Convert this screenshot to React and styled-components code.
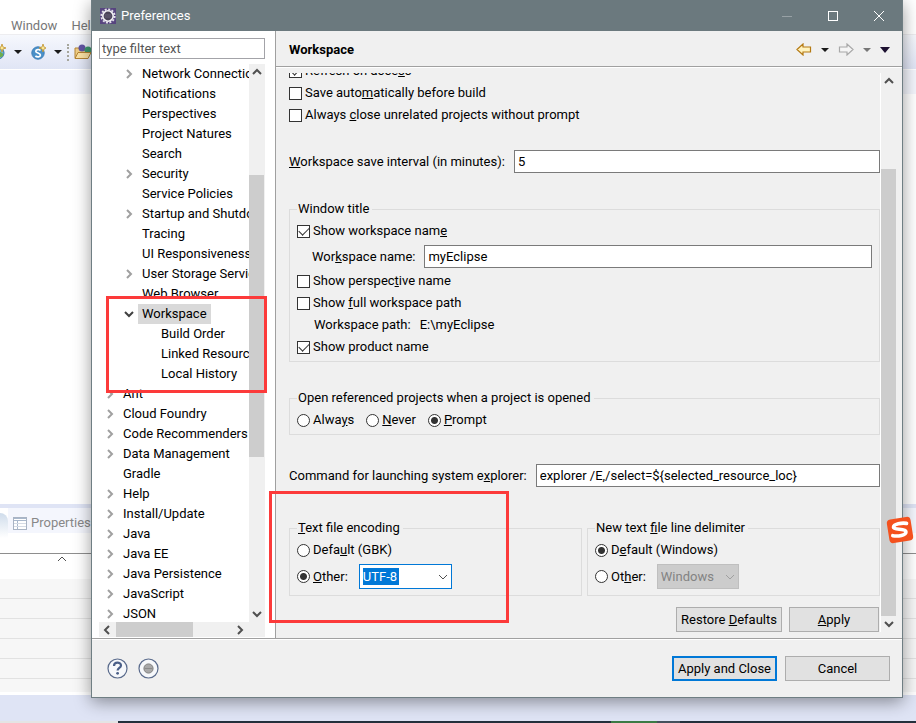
import React, { useState } from 'react'
import styled, { createGlobalStyle, css } from 'styled-components'

const GlobalStyle = createGlobalStyle`
  * {
    box-sizing: border-box;
  }
  body {
    margin: 0;
    background: #fff;
    color: #000;
    font: 13px/18px Roboto, "Liberation Sans", sans-serif;
  }
  button, input, select {
    font: inherit;
    color: inherit;
  }
  svg {
    flex: none;
  }
`

const TREE = [
  { label: 'Network Connections', level: 1, arrow: 'closed' },
  { label: 'Notifications', level: 1 },
  { label: 'Perspectives', level: 1 },
  { label: 'Project Natures', level: 1 },
  { label: 'Search', level: 1 },
  { label: 'Security', level: 1, arrow: 'closed' },
  { label: 'Service Policies', level: 1 },
  { label: 'Startup and Shutdown', level: 1, arrow: 'closed' },
  { label: 'Tracing', level: 1 },
  { label: 'UI Responsiveness', level: 1 },
  { label: 'User Storage Service', level: 1, arrow: 'closed' },
  { label: 'Web Browser', level: 1 },
  { label: 'Workspace', level: 1, arrow: 'open', selected: true },
  { label: 'Build Order', level: 2 },
  { label: 'Linked Resources', level: 2 },
  { label: 'Local History', level: 2 },
  { label: 'Ant', level: 0, arrow: 'closed' },
  { label: 'Cloud Foundry', level: 0, arrow: 'closed' },
  { label: 'Code Recommenders', level: 0, arrow: 'closed' },
  { label: 'Data Management', level: 0, arrow: 'closed' },
  { label: 'Gradle', level: 0 },
  { label: 'Help', level: 0, arrow: 'closed' },
  { label: 'Install/Update', level: 0, arrow: 'closed' },
  { label: 'Java', level: 0, arrow: 'closed' },
  { label: 'Java EE', level: 0, arrow: 'closed' },
  { label: 'Java Persistence', level: 0, arrow: 'closed' },
  { label: 'JavaScript', level: 0, arrow: 'closed' },
  { label: 'JSON', level: 0, arrow: 'closed' },
]

const CHEVRONS = {
  up: 'M1 7l4-4 4 4',
  down: 'M1 3l4 4 4-4',
  left: 'M7 1L3 5l4 4',
  right: 'M3 1l4 4-4 4',
}

const Chevron = ({ dir, color = '#505050', weight = 2 }) => (
  <svg width="10" height="10" viewBox="0 0 10 10" fill="none" stroke={color} strokeWidth={weight}>
    <path d={CHEVRONS[dir]} />
  </svg>
)

const Caret = ({ color = '#1a1a1a', wide }) => (
  <svg width={wide ? 10 : 8} height={wide ? 6 : 4} viewBox="0 0 8 4" preserveAspectRatio="none">
    <path d="M0 0h8L4 4z" fill={color} />
  </svg>
)

const EclipseIcon = () => (
  <svg width="16" height="16" viewBox="0 0 16 16">
    <rect width="16" height="16" fill="#57457f" />
    <circle cx="8" cy="8" r="6.7" fill="none" stroke="#e4e2ea" strokeWidth="1.8" strokeDasharray="2 1.508" />
    <circle cx="8" cy="8" r="5.2" fill="#4a4358" stroke="#f4f3f7" strokeWidth="1.6" />
    <path d="M4.500 7h7M4.500 9h7" stroke="#6f6780" strokeWidth="0.8" />
  </svg>
)

const BackArrow = () => (
  <svg width="16" height="13" viewBox="0 0 16 13">
    <path d="M1 6.500L7 1v3h7.500v5H7v3z" fill="#fff3bf" stroke="#b57a13" strokeWidth="1.2" />
  </svg>
)

const ForwardArrow = () => (
  <svg width="16" height="13" viewBox="0 0 16 13">
    <path d="M15 6.500L9 1v3H1.500v5H9v3z" fill="#f5f5f5" stroke="#a8a8a8" strokeWidth="1.2" />
  </svg>
)

const GlobeIcon = () => (
  <svg width="16" height="16" viewBox="0 0 16 16">
    <circle cx="8" cy="9" r="6" fill="#6fb3d8" stroke="#3a78a8" />
    <path d="M7 9c2-2 5-1 6 1s-2 4-4 3-3-3-2-4z" fill="#6dae4d" />
    <path d="M12 0l1 3 3 1-3 1-1 3-1-3-3-1 3-1z" fill="#fbe795" stroke="#c09330" strokeWidth="0.8" />
  </svg>
)

const ServletIcon = () => (
  <svg width="16" height="16" viewBox="0 0 16 16">
    <circle cx="8" cy="9" r="6.2" fill="#4a90c8" stroke="#3f7fb8" />
    <path d="M10.500 6.500C9 5 5.800 5.200 5.800 7.200S10.400 8.800 10.400 11s-3.200 2.500-5 1" fill="none" stroke="#fff" strokeWidth="1.7" />
    <path d="M13 0l1 3 2 1-2 1-1 3-1-3-3-1 3-1z" fill="#fbe795" stroke="#c09330" strokeWidth="0.8" />
  </svg>
)

const FolderIcon = () => (
  <svg width="18" height="16" viewBox="0 0 18 16">
    <path d="M1 14V4h4l1 2h8v8z" fill="#f0cf86" stroke="#b58434" />
    <circle cx="8" cy="4" r="3.500" fill="#6255a4" />
    <circle cx="14" cy="6" r="3.500" fill="#3f9a6e" />
    <path d="M1 14.500l3-6h13l-3 6z" fill="#fbe3a5" stroke="#b58434" />
  </svg>
)

const TableIcon = () => (
  <svg width="14" height="13" viewBox="0 0 14 13" fill="none">
    <rect x="0.5" y="0.5" width="13" height="12" fill="#fff" stroke="#a9b4c4" />
    <path d="M1 1.500h12M1 3.500h12M4.500 3v9" stroke="#a9b8cc" />
    <path d="M1 6.500h12M1 9.500h12" stroke="#d5dbe5" />
  </svg>
)

const HelpIcon = () => (
  <svg width="21" height="21" viewBox="0 0 21 21" fill="none">
    <circle cx="10.5" cy="10.5" r="9.5" fill="#f6f8fb" stroke="#5a6b8c" strokeWidth="1.2" />
    <path d="M7 8c0-4.600 7-4.200 7-.6 0 2.400-3.400 2.600-3.400 5" stroke="#4a5f88" strokeWidth="2.2" />
    <circle cx="10.6" cy="15.3" r="1.4" fill="#4a5f88" />
  </svg>
)

const RecordIcon = () => (
  <svg width="21" height="21" viewBox="0 0 21 21">
    <circle cx="10.5" cy="10.5" r="9.5" fill="#f6f8fb" stroke="#5a6b8c" strokeWidth="1.2" />
    <circle cx="10.5" cy="10.5" r="4.6" fill="#a8a8a8" stroke="#808080" />
    <path d="M6.500 10.500h8" stroke="#8a8a8a" />
  </svg>
)

const SogouIcon = () => (
  <svg width="28" height="28" viewBox="0 0 28 28">
    <g transform="rotate(-9 14 14)">
      <rect x="2" y="2" width="24" height="24" rx="4" fill="#f4511e" />
      <path
        d="M21.500 8.500C17 7 8.500 7 8 10.300c-.4 3.200 12 2.400 11.600 6.400-.3 3.400-8.600 3.600-13.600 1.800"
        fill="none"
        stroke="#fff"
        strokeWidth="3.6"
        strokeLinecap="round"
      />
    </g>
  </svg>
)

// the IDE window behind the dialog

const Screen = styled.div`
  position: relative;
  min-height: 100vh;
  overflow: hidden;
  display: flex;
  flex-direction: column;
`

const MenuBar = styled.nav`
  display: flex;
  gap: 14px;
  height: 35px;
  padding: 17px 11px 0;
  color: #777;
  border-bottom: 1px solid #ededf0;
`

const ToolBar = styled.div`
  display: flex;
  align-items: center;
  gap: 8px;
  height: 35px;
  border-bottom: 1px solid #fff;
  background: linear-gradient(#f6f8fd, #e0e5f5);
`

const IconClip = styled.span`
  display: flex;
  justify-content: flex-end;
  width: 6px;
  overflow: hidden;
`

const Grip = styled.span`
  height: 17px;
  margin: 0 -3px;
  border-left: 2px dotted #a6a69c;
`

const PerspectiveBar = styled.div`
  height: 24px;
  background: #f3f5fc;
`

const EditorArea = styled.main`
  flex: 1;
`

const TabStrip = styled.div`
  display: flex;
  height: 49px;
  padding-top: 5px;
  background: #fff;
  border-top: 4px solid #dfe4f5;
`

const ActiveTab = styled.div`
  width: 8px;
  height: 25px;
  border-radius: 0 8px 0 0;
  background: linear-gradient(#cfdceb, #fff);
`

const PropertiesTab = styled.div`
  flex: 1;
  display: flex;
  align-items: center;
  gap: 4px;
  height: 25px;
  margin-top: -5px;
  padding: 5px 5px 0;
  background: #f4f6fd;
  color: #888;
`

const TableHead = styled.div`
  height: 26px;
  padding-left: 57px;
  line-height: 8px;
  border-top: 1px solid #8e8e8e;
`

const TableRow = styled.div`
  height: 20px;
  background: #f7f7f7;
  border-bottom: 1px solid #e2e2e2;
`

const TableEnd = styled.div`
  height: 13px;
  background: #f7f7f7;
`

const StatusBar = styled.div`
  height: 29px;
  border-top: 3px solid #fff;
  background: #dfe4f5;
`

const TaskBar = styled.footer`
  display: flex;
  height: 2px;
  background: #24303c;
`

const TaskSlot = styled.span`
  width: ${p => p.$width}px;
  margin-right: ${p => p.$gap || 0}px;
  background: ${p => p.$color};
`

const Ime = styled.div`
  position: absolute;
  z-index: 1;
  top: 516px;
  right: 2px;
  height: 28px;
`

// the dialog window

const Dialog = styled.section`
  position: absolute;
  top: 0;
  left: 91px;
  right: 13px;
  border: 1px solid #6f7e83;
  border-top: 0;
  background: #f0f0f0;
  box-shadow: 0 4px 16px rgba(0, 0, 0, 0.4);
`

const TitleBar = styled.header`
  display: flex;
  align-items: center;
  gap: 5px;
  height: 31px;
  padding-left: 8px;
  background: #6b797e;
  color: #fff;
`

const WindowButton = styled.button`
  display: flex;
  align-items: center;
  justify-content: center;
  width: 46px;
  height: 31px;
  margin-left: ${p => (p.$first ? 'auto' : '-5px')};
  padding: 0;
  border: 0;
  background: none;
  color: #fff;
  opacity: ${p => (p.disabled ? 0.3 : 1)};
`

const Body = styled.div`
  display: flex;
  border-bottom: 1px solid #a0a0a0;
`

const Sidebar = styled.aside`
  width: 184px;
  padding: 7px 10px 0 7px;
  border-right: 1px solid #a0a0a0;
  background: #fff;
`

const FilterInput = styled.input`
  display: block;
  width: 100%;
  height: 21px;
  margin-bottom: 5px;
  padding: 0 2px;
  border: 1px solid #a3a3a8;
  outline: 0;
  &::placeholder {
    color: #555;
    opacity: 1;
  }
`

const TreeGrid = styled.div`
  display: grid;
  grid-template: 558px 15px / 1fr 16px;
`

const Tree = styled.ul`
  margin: 0;
  padding: 0;
  overflow: hidden;
  list-style: none;
`

const TreeItem = styled.li`
  display: flex;
  gap: 1px;
  height: 20px;
  padding-left: ${p => 2 + p.$level * 19}px;
  white-space: nowrap;
`

const TreeArrow = styled.span`
  flex: none;
  display: flex;
  align-items: center;
  justify-content: center;
  width: 17px;
`

const TreeLabel = styled.span`
  padding: 0 4px;
  line-height: 20px;
  background: ${p => (p.$selected ? '#d9d9d9' : 'none')};
`

const ScrollBar = styled.div`
  display: flex;
  align-items: center;
  justify-content: space-between;
  background: #f0f0f0;
  ${p => p.$vertical ? css`
    flex-direction: column;
    padding: 3px 0;
  ` : css`
    padding: 0 4px 0 3px;
  `}
`

const Track = styled.div`
  flex: 1;
  display: flex;
  ${p => p.$vertical ? css`
    flex-direction: column;
    width: 100%;
  ` : css`
    height: 100%;
    margin: 0 4px;
  `}
`

const Thumb = styled.div`
  background: #cdcdcd;
  ${p => p.$vertical ? css`
    width: 15px;
    height: ${p.$size};
    margin-top: ${p.$start}px;
  ` : css`
    width: ${p.$size};
  `}
`

const Corner = styled.div`
  background: #f0f0f0;
`

const Page = styled.div`
  flex: 1;
  min-width: 0;
`

const PageHeader = styled.div`
  display: flex;
  align-items: center;
  justify-content: space-between;
  height: 36px;
  padding: 2px 12px 0 13px;
  border-bottom: 1px solid #a0a0a0;
  box-shadow: 0 1px #fff;
`

const PageTitle = styled.h1`
  margin: 0;
  font-size: 13px;
  font-weight: 700;
`

const NavBar = styled.div`
  display: flex;
  align-items: center;
  gap: 9px;
`

const NavButton = styled.button`
  display: flex;
  padding: 0;
  border: 0;
  background: none;
`

const ScrollArea = styled.div`
  display: flex;
  height: 559px;
  margin: 6px 6px 6px 0;
  padding-left: 13px;
`

const Viewport = styled.div`
  flex: 1;
  overflow: hidden;
`

// scrolled a little way down, so the first row is half hidden
const Content = styled.form`
  margin-top: -13px;
`

const PageScroll = styled(ScrollBar)`
  width: 16px;
  border-left: 1px solid #fff;
`

const Option = styled.label`
  display: flex;
  align-items: center;
  gap: 3px;
  height: ${p => (p.$tall ? 31 : 22)}px;
  white-space: nowrap;
`

const Check = styled.input`
  appearance: none;
  flex: none;
  width: 13px;
  height: 13px;
  margin: 0;
  border: 1px solid #333;
  border-radius: ${p => (p.type === 'radio' ? '50%' : 0)};
  background: #fff;
  ${p => p.type === 'checkbox' && css`
    &:checked::after {
      content: '';
      display: block;
      width: 9px;
      height: 5px;
      margin: 1px;
      border: solid #333;
      border-width: 0 0 1px 1px;
      transform: rotate(-45deg);
    }
  `}
  ${p => p.type === 'radio' && css`
    &:checked {
      background: radial-gradient(circle, #333 3px, #fff 4px);
    }
  `}
`

const Field = styled.div`
  display: flex;
  align-items: center;
  gap: 9px;
  height: 23px;
  margin-top: ${p => p.$top || 0}px;
  margin-bottom: ${p => p.$bottom || 0}px;
  padding-left: ${p => p.$indent || 0}px;
  white-space: nowrap;
`

const TextInput = styled.input`
  flex: 1;
  min-width: 0;
  height: 23px;
  padding: 0 3px;
  border: 1px solid #7a7a7a;
  outline: 0;
  background: #fff;
`

const Group = styled.fieldset`
  min-width: 0;
  margin: ${p => p.$top}px 0 0;
  padding: 2px 7px 3px;
  border: 1px solid #dcdcdc;
`

const Legend = styled.legend`
  padding: 0 3px 0 1px;
`

const PathRow = styled.div`
  display: flex;
  gap: 9px;
  padding: 2px 0 2px 17px;
`

const Inline = styled.div`
  display: flex;
  align-items: center;
  gap: ${p => p.$gap}px;
`

const Halves = styled.div`
  display: grid;
  grid-template-columns: 1fr 1fr;
  gap: 5px;
`

const SelectWrap = styled.span`
  position: relative;
  display: flex;
  width: ${p => p.$width}px;
  svg {
    position: absolute;
    right: 4px;
    top: 8px;
    pointer-events: none;
  }
`

const Select = styled.select`
  appearance: none;
  width: 100%;
  height: 25px;
  padding: 0 3px;
  border: 1px solid #0078d7;
  border-radius: 0;
  outline: 0;
  background: #fff;
  &:disabled {
    border-color: #bfbfbf;
    background: #ccc;
    color: #838383;
    opacity: 1;
  }
`

const ComboInput = styled.input`
  width: 100%;
  height: 25px;
  padding: 0 3px;
  border: 1px solid #0078d7;
  outline: 0;
  background: linear-gradient(#0078d7, #0078d7) 3px 3px / 36px 17px no-repeat #fff;
  color: #fff;
`

const Actions = styled.div`
  display: flex;
  justify-content: flex-end;
  gap: 7px;
  margin: 11px 1px 0 0;
`

const Button = styled.button`
  width: ${p => p.$width}px;
  height: 25px;
  padding: 0;
  border: ${p => (p.$primary ? '2px solid #0078d7' : '1px solid #adadad')};
  background: #e1e1e1;
  white-space: nowrap;
`

const Footer = styled.footer`
  display: flex;
  align-items: center;
  gap: 10px;
  height: 58px;
  padding: 0 12px 0 15px;
  border-top: 1px solid #fff;
`

const Buttons = styled.div`
  display: flex;
  gap: 8px;
  margin-left: auto;
`

// red marker frame drawn over the window
const Marker = styled.div`
  position: absolute;
  left: ${p => p.$left}px;
  top: ${p => p.$top}px;
  width: ${p => p.$width}px;
  height: ${p => p.$height}px;
  border: 3px solid #fc3a3a;
  pointer-events: none;
`

const Toggle = ({ type = 'checkbox', children, tall, ...rest }) => (
  <Option $tall={tall}>
    <Check type={type} {...rest} />
    <span>{children}</span>
  </Option>
)

const Background = () => (
  <>
    <MenuBar>
      <span>Window</span>
      <span>Help</span>
    </MenuBar>
    <ToolBar>
      <IconClip><GlobeIcon /></IconClip>
      <Caret />
      <ServletIcon />
      <Caret />
      <Grip />
      <FolderIcon />
    </ToolBar>
    <PerspectiveBar />
    <EditorArea />
    <TabStrip>
      <ActiveTab />
      <PropertiesTab>
        <TableIcon />
        <span>Properties</span>
      </PropertiesTab>
    </TabStrip>
    <TableHead>
      <Chevron dir="up" weight={1} />
    </TableHead>
    {[1, 2, 3, 4, 5].map(n => <TableRow key={n} />)}
    <TableEnd />
    <StatusBar />
    <TaskBar>
      <TaskSlot $width={118} $gap={493} $color="#e4e4e4" />
      <TaskSlot $width={46} $color="#3c7a45" />
      <TaskSlot $width={23} $color="#45505c" />
    </TaskBar>
  </>
)

const PreferenceTree = () => (
  <TreeGrid>
    <Tree>
      {TREE.map(({ label, level, arrow, selected }) => (
        <TreeItem key={label} $level={level}>
          <TreeArrow>
            {arrow === 'closed' && <Chevron dir="right" color="#a0a0a0" />}
            {arrow === 'open' && <Chevron dir="down" color="#404040" />}
          </TreeArrow>
          <TreeLabel $selected={selected}>{label}</TreeLabel>
        </TreeItem>
      ))}
    </Tree>
    <ScrollBar $vertical>
      <Chevron dir="up" />
      <Track $vertical><Thumb $vertical $start={98} $size="282px" /></Track>
      <Chevron dir="down" />
    </ScrollBar>
    <ScrollBar>
      <Chevron dir="left" />
      <Track><Thumb $size="77px" /></Track>
      <Chevron dir="right" />
    </ScrollBar>
    <Corner />
  </TreeGrid>
)

const WorkspacePage = () => {
  const [open, setOpen] = useState('prompt')

  return (
    <Content>
      <Toggle defaultChecked>Refresh on acce<u>s</u>s</Toggle>
      <Toggle>Save auto<u>m</u>atically before build</Toggle>
      <Toggle>Always <u>c</u>lose unrelated projects without prompt</Toggle>
      <Field $top={24}>
        <label htmlFor="interval"><u>W</u>orkspace save interval (in minutes):</label>
        <TextInput id="interval" defaultValue="5" />
      </Field>

      <Group $top={27}>
        <Legend>Window title</Legend>
        <Toggle defaultChecked>Show workspace nam<u>e</u></Toggle>
        <Field $top={3} $bottom={2} $indent={15}>
          <label htmlFor="wsname">Wor<u>k</u>space name:</label>
          <TextInput id="wsname" defaultValue="myEclipse" />
        </Field>
        <Toggle>Show perspec<u>t</u>ive name</Toggle>
        <Toggle>Show <u>f</u>ull workspace path</Toggle>
        <PathRow>
          <span>Workspace path:</span>
          <span>E:\myEclipse</span>
        </PathRow>
        <Toggle defaultChecked>Show product name</Toggle>
      </Group>

      <Group $top={27}>
        <Legend>Open referenced projects when a project is opened</Legend>
        <Inline $gap={12}>
          <Toggle type="radio" name="open" checked={open === 'always'} onChange={() => setOpen('always')}>Alwa<u>y</u>s</Toggle>
          <Toggle type="radio" name="open" checked={open === 'never'} onChange={() => setOpen('never')}><u>N</u>ever</Toggle>
          <Toggle type="radio" name="open" checked={open === 'prompt'} onChange={() => setOpen('prompt')}><u>P</u>rompt</Toggle>
        </Inline>
      </Group>

      <Field $top={29}>
        <label htmlFor="explorer">Command for launching system e<u>x</u>plorer:</label>
        <TextInput id="explorer" defaultValue="explorer /E,/select=${selected_resource_loc}" />
      </Field>

      <Halves>
        <Group $top={32}>
          <Legend><u>T</u>ext file encoding</Legend>
          <Toggle type="radio" name="encoding">Defa<u>u</u>lt (GBK)</Toggle>
          <Inline $gap={11}>
            <Toggle type="radio" name="encoding" tall defaultChecked><u>O</u>ther:</Toggle>
            <SelectWrap $width={93}>
              <ComboInput aria-label="Encoding" defaultValue="UTF-8" />
              <Chevron dir="down" weight={1} />
            </SelectWrap>
          </Inline>
        </Group>
        <Group $top={32}>
          <Legend>New text <u>f</u>ile line delimiter</Legend>
          <Toggle type="radio" name="delimiter" defaultChecked>D<u>e</u>fault (Windows)</Toggle>
          <Inline $gap={11}>
            <Toggle type="radio" name="delimiter" tall>Ot<u>h</u>er:</Toggle>
            <SelectWrap $width={82}>
              <Select aria-label="Delimiter" disabled>
                <option>Windows</option>
              </Select>
              <Chevron dir="down" weight={1} color="#a0a0a0" />
            </SelectWrap>
          </Inline>
        </Group>
      </Halves>

      <Actions>
        <Button type="button" $width={106}>Restore <u>D</u>efaults</Button>
        <Button type="button" $width={90}><u>A</u>pply</Button>
      </Actions>
    </Content>
  )
}

const App = () => (
  <Screen>
    <GlobalStyle />
    <Background />
    <Dialog>
      <TitleBar>
        <EclipseIcon />
        <span>Preferences</span>
        <WindowButton $first disabled aria-label="Minimize">
          <svg width="10" height="10"><path d="M0 5.500h10" stroke="currentColor" /></svg>
        </WindowButton>
        <WindowButton aria-label="Maximize">
          <svg width="10" height="10"><rect x="0.5" y="0.5" width="9" height="9" fill="none" stroke="currentColor" /></svg>
        </WindowButton>
        <WindowButton aria-label="Close">
          <svg width="10" height="10"><path d="M0 0l10 10M10 0L0 10" stroke="currentColor" /></svg>
        </WindowButton>
      </TitleBar>
      <Body>
        <Sidebar>
          <FilterInput aria-label="Filter" placeholder="type filter text" />
          <PreferenceTree />
        </Sidebar>
        <Page>
          <PageHeader>
            <PageTitle>Workspace</PageTitle>
            <NavBar>
              <NavButton aria-label="Back"><BackArrow /></NavButton>
              <NavButton aria-label="Back history"><Caret /></NavButton>
              <NavButton aria-label="Forward"><ForwardArrow /></NavButton>
              <NavButton aria-label="Forward history"><Caret color="#777" /></NavButton>
              <NavButton aria-label="View menu"><Caret wide color="#1c1030" /></NavButton>
            </NavBar>
          </PageHeader>
          <ScrollArea>
            <Viewport><WorkspacePage /></Viewport>
            <PageScroll $vertical>
              <Chevron dir="up" />
              <Track $vertical><Thumb $vertical $start={83} $size="447px" /></Track>
              <Chevron dir="down" />
            </PageScroll>
          </ScrollArea>
        </Page>
      </Body>
      <Footer>
        <NavButton aria-label="Help"><HelpIcon /></NavButton>
        <NavButton aria-label="Record"><RecordIcon /></NavButton>
        <Buttons>
          <Button $width={105} $primary>Apply and Close</Button>
          <Button $width={105}>Cancel</Button>
        </Buttons>
      </Footer>
      <Marker $left={14} $top={296} $width={161} $height={97} />
      <Marker $left={177} $top={491} $width={240} $height={132} />
    </Dialog>
    <Ime><SogouIcon /></Ime>
  </Screen>
)

export default App
